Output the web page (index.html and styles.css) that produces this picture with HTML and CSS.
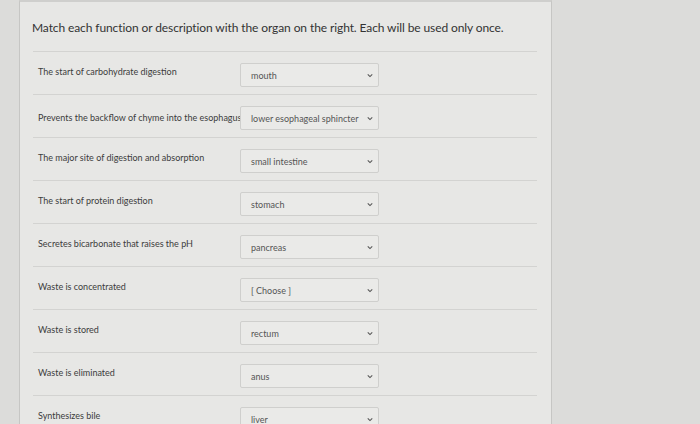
FILE: index.html
```html
<!DOCTYPE html>
<html lang="en">
<head>
  <meta charset="UTF-8" />
  <title>Matching Question</title>
  <link rel="stylesheet" href="styles.css">
</head>
<body>

  <div class="panel">
    <p class="question-text">Match each function or description with the organ on the right. Each will be used only once.</p>

    <!-- Answer rows -->
    <div class="answers">
      <div class="row">
        <div class="label">The start of carbohydrate digestion</div>
        <div class="select"><span>mouth</span><svg viewBox="0 0 8 6"><path d="M1 1.5 L4 4.5 L7 1.5"/></svg></div>
      </div>
      <div class="row">
        <div class="label label-mid">Prevents the backflow of chyme into the esophagus</div>
        <div class="select"><span>lower esophageal sphincter</span><svg viewBox="0 0 8 6"><path d="M1 1.5 L4 4.5 L7 1.5"/></svg></div>
      </div>
      <div class="row">
        <div class="label">The major site of digestion and absorption</div>
        <div class="select"><span>small intestine</span><svg viewBox="0 0 8 6"><path d="M1 1.5 L4 4.5 L7 1.5"/></svg></div>
      </div>
      <div class="row">
        <div class="label">The start of protein digestion</div>
        <div class="select"><span>stomach</span><svg viewBox="0 0 8 6"><path d="M1 1.5 L4 4.5 L7 1.5"/></svg></div>
      </div>
      <div class="row">
        <div class="label">Secretes bicarbonate that raises the pH</div>
        <div class="select"><span>pancreas</span><svg viewBox="0 0 8 6"><path d="M1 1.5 L4 4.5 L7 1.5"/></svg></div>
      </div>
      <div class="row">
        <div class="label">Waste is concentrated</div>
        <div class="select"><span>[ Choose ]</span><svg viewBox="0 0 8 6"><path d="M1 1.5 L4 4.5 L7 1.5"/></svg></div>
      </div>
      <div class="row">
        <div class="label">Waste is stored</div>
        <div class="select"><span>rectum</span><svg viewBox="0 0 8 6"><path d="M1 1.5 L4 4.5 L7 1.5"/></svg></div>
      </div>
      <div class="row">
        <div class="label">Waste is eliminated</div>
        <div class="select"><span>anus</span><svg viewBox="0 0 8 6"><path d="M1 1.5 L4 4.5 L7 1.5"/></svg></div>
      </div>
      <div class="row">
        <div class="label">Synthesizes bile</div>
        <div class="select"><span>liver</span><svg viewBox="0 0 8 6"><path d="M1 1.5 L4 4.5 L7 1.5"/></svg></div>
      </div>
    </div>
  </div>

</body>
</html>
```

FILE: styles.css
```css
body {
  margin: 0;
  height: 424px;
  overflow: hidden;
  background-color: #dcdcda;
  font-family: Lato, "Open Sans", sans-serif;
  color: #3a3a3a;
}

.panel {
  width: 533px;
  height: 100%;
  margin-left: 19px;
  background-color: #e7e7e5;
  border-left: 1px solid #c6c6c4;
  border-right: 1px solid #c6c6c4;
  border-top: 2px solid #cfcfcd;
  box-sizing: border-box;
}

.question-text {
  margin: 0;
  padding: 18px 0 0 12px;
  height: 31px;
  font-size: 12px;
  letter-spacing: -0.1px;
  color: #333;
}

.answers {
  margin-left: 13px;
  margin-right: 14px;
}

.row {
  display: flex;
  align-items: flex-start;
  border-top: 1px solid #d3d3d1;
  padding-top: 11px;
  height: 31px;
}

.label {
  width: 202px;
  padding: 3px 0 0 5px;
  font-size: 9px;
  color: #3c3c3c;
  white-space: nowrap;
}

.label-mid {
  padding-top: 6px;
}

.select {
  display: flex;
  align-items: center;
  justify-content: space-between;
  width: 139px;
  height: 24px;
  padding: 0 5px 0 10px;
  box-sizing: border-box;
  background-color: #eaeae8;
  border: 1px solid #cfcfcd;
  border-radius: 2px;
  font-size: 9px;
  color: #555;
}

.select svg {
  width: 6px;
  height: 5px;
  fill: none;
  stroke: #555;
  stroke-width: 1.4;
}
```
